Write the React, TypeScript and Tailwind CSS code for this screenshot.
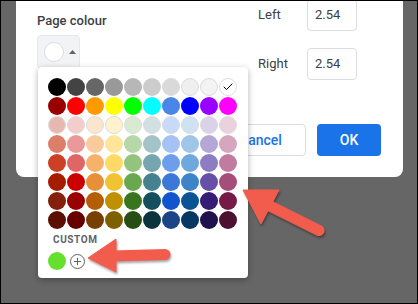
import { Check, Plus } from "lucide-react";

const rows = [
  ["#000000", "#434343", "#666666", "#999999", "#b7b7b7", "#cccccc", "#d9d9d9", "#efefef", "#f3f3f3", "#ffffff"],
  ["#980000", "#ff0000", "#ff9900", "#ffff00", "#00ff00", "#00ffff", "#4a86e8", "#0000ff", "#9900ff", "#ff00ff"],
  ["#e6b8af", "#f4cccc", "#fce5cd", "#fff2cc", "#d9ead3", "#d0e0e3", "#c9daf8", "#cfe2f3", "#d9d2e9", "#ead1dc"],
  ["#dd7e6b", "#ea9999", "#f9cb9c", "#ffe599", "#b6d7a8", "#a2c4c9", "#a4c2f4", "#9fc5e8", "#b4a7d6", "#d5a6bd"],
  ["#cc4125", "#e06666", "#f6b26b", "#ffd966", "#93c47d", "#76a5af", "#6d9eeb", "#6fa8dc", "#8e7cc3", "#c27ba0"],
  ["#a61c00", "#cc0000", "#e69138", "#f1c232", "#6aa84f", "#45818e", "#3c78d8", "#3d85c6", "#674ea7", "#a64d79"],
  ["#85200c", "#990000", "#b45f06", "#bf9000", "#38761d", "#134f5c", "#1155cc", "#0b5394", "#351c75", "#741b47"],
  ["#5b0f00", "#660000", "#783f04", "#7f6000", "#274e13", "#0c343d", "#1c4587", "#073763", "#20124d", "#4c1130"],
];

// light swatches get a faint rim so they read on the white panel
const light = (r: number, c: number) => (r === 0 && c >= 6) || r === 2;

function Swatch({ color, rim, checked }: { color: string; rim: boolean; checked?: boolean }) {
  return (
    <div
      className={`w-[18px] h-[18px] rounded-full flex items-center justify-center ${
        rim ? "border border-[#dcdcdc]" : ""
      }`}
      style={{ backgroundColor: color }}
    >
      {checked && <Check className="w-[12px] h-[12px] text-black" strokeWidth={2} />}
    </div>
  );
}

function ColourMenu() {
  return (
    <div className="absolute left-[37px] top-[66px] w-[210px] h-[211px] bg-white rounded-[4px] shadow-[0_2px_6px_rgba(0,0,0,0.3)] pt-[11px] pl-[10px]">
      <div className="grid grid-cols-[repeat(10,18px)] gap-[1px]">
        {rows.map((row, r) =>
          row.map((c, i) => (
            <Swatch key={`${r}-${i}`} color={c} rim={light(r, i)} checked={r === 0 && i === 9} />
          ))
        )}
      </div>
      <div className="mt-[5px] pl-[5px] text-[10px] leading-[12px] font-bold tracking-[0.6px] text-[#5f6368]">
        CUSTOM
      </div>
      <div className="mt-[6px] flex items-center gap-[4px]">
        <div className="w-[18px] h-[18px] rounded-full bg-[#66e02e]" />
        <div className="w-[15px] h-[15px] rounded-full border-[1.3px] border-[#5f6368] flex items-center justify-center">
          <Plus className="w-[11px] h-[11px] text-[#5f6368]" strokeWidth={2.2} />
        </div>
      </div>
    </div>
  );
}

function Arrows() {
  return (
    <svg
      className="absolute left-[-1px] top-[-1px] pointer-events-none drop-shadow-[1px_2px_1px_rgba(0,0,0,0.35)]"
      width={418}
      height={304}
      viewBox="0 0 418 304"
    >
      <g fill="#f25c4d" stroke="#f25c4d">
        <line x1={268} y1={205} x2={319} y2={230.5} strokeWidth={11} strokeLinecap="round" />
        <polygon points="243,190 279,190 261,224" strokeWidth={1} strokeLinejoin="round" />
        <line x1={112} y1={256} x2={165} y2={254.5} strokeWidth={11} strokeLinecap="round" />
        <polygon points="88,258 116,239 116,272" strokeWidth={1} strokeLinejoin="round" />
      </g>
    </svg>
  );
}

export default function App() {
  return (
    <div className="relative w-[418px] h-[304px] overflow-hidden bg-[#666666] border border-black font-['Roboto',sans-serif]">
      <div className="ml-[15px] w-[387px] h-[176px] bg-white rounded-b-[8px] flex flex-col">
        <div className="flex justify-between">
          <div className="pl-[21px] pt-[10px]">
            <div className="text-[13px] leading-[20px] font-medium text-[#3c4043]">Page colour</div>
            <div className="mt-[4px] w-[43px] h-[34px] rounded-[4px] bg-[#f1f3f4] border border-[#e6e8ea] flex items-center pl-[6px] gap-[5px]">
              <div className="w-[20px] h-[20px] rounded-full bg-white border border-[#dadce0]" />
              <svg width={7} height={4} viewBox="0 0 7 4">
                <polygon points="3.5,0 7,4 0,4" fill="#5f6368" />
              </svg>
            </div>
          </div>
          <div className="pr-[46px] -mt-[2px] grid grid-cols-[49px_50px] gap-y-[17px] items-center text-[13px] text-[#3c4043]">
            <span>Left</span>
            <div className="h-[32px] w-[50px] border border-[#dadce0] rounded-[4px] pl-[7px] flex items-center">2.54</div>
            <span>Right</span>
            <div className="h-[32px] w-[50px] border border-[#dadce0] rounded-[4px] pl-[7px] flex items-center">2.54</div>
          </div>
        </div>
        <div className="mt-[44px] pr-[22px] flex justify-end gap-[11px] text-[14px] font-medium">
          <button className="w-[91px] h-[32px] border border-[#dadce0] rounded-[4px] text-[#1a73e8]">Cancel</button>
          <button className="w-[64px] h-[32px] bg-[#1a73e8] rounded-[4px] text-white">OK</button>
        </div>
      </div>
      <ColourMenu />
      <Arrows />
    </div>
  );
}
